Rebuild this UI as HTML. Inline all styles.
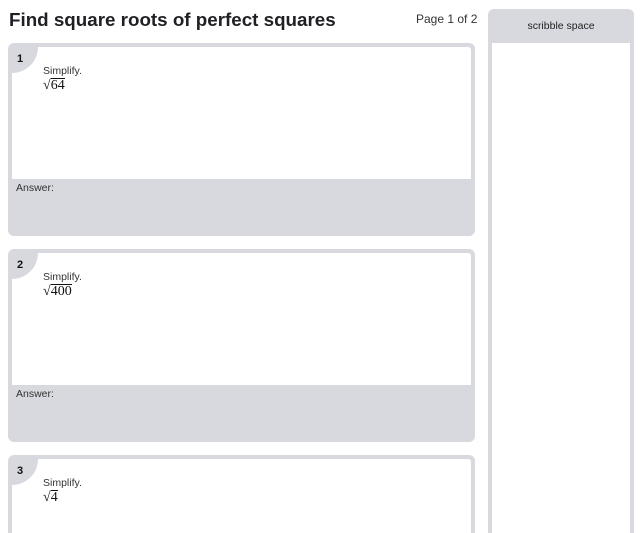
<!DOCTYPE html>
<html><head><style>
html,body{margin:0;width:640px;height:533px;overflow:hidden;background:#fff;font-family:"Liberation Sans",sans-serif;position:relative}
h1{position:absolute;left:9px;top:9px;margin:0;font-size:18.8px;font-weight:bold;color:#1f1f24}
.pg{position:absolute;left:416px;top:12px;font-size:12px;color:#333}
.card{position:absolute;left:8px;width:467px;height:193px;background:#d8d9df;border-radius:6px}
.in{position:absolute;left:4px;top:4px;width:459px;height:132px;background:#fff;border-radius:3px 3px 0 0;overflow:hidden}
.badge{position:absolute;left:0;top:0;width:26px;height:26px;background:#d8d9df;border-bottom-right-radius:26px}
.num{position:absolute;left:5px;top:6px;font-size:11px;font-weight:bold;color:#111}
.s{position:absolute;left:31px;top:18px;font-size:10.5px;color:#333}
.m{position:absolute;left:31px;top:31px;font-family:"Liberation Serif",serif;font-size:14px;line-height:16px;color:#111;font-weight:bold}
.m span{display:inline-block;border-top:1px solid #111;line-height:13px;font-weight:normal}
.ans{position:absolute;left:8px;top:139px;font-size:10.5px;color:#333}
.scr{position:absolute;left:488px;top:9px;width:146px;height:524px;background:#d8d9df;border-radius:6px 6px 0 0}
.scr .h{height:34px;line-height:34px;text-align:center;font-size:10.5px;color:#222}
.scr .w{position:absolute;left:4px;top:34px;right:4px;bottom:0;background:#fff}
</style></head><body>
<h1>Find square roots of perfect squares</h1>
<div class="pg">Page 1 of 2</div>
<div class="card" style="top:43px"><div class="in"><div class="badge"></div><div class="num">1</div><div class="s">Simplify.</div><div class="m">√<span>64</span></div></div><div class="ans">Answer:</div></div>
<div class="card" style="top:249px"><div class="in"><div class="badge"></div><div class="num">2</div><div class="s">Simplify.</div><div class="m">√<span>400</span></div></div><div class="ans">Answer:</div></div>
<div class="card" style="top:455px;height:78px;border-radius:6px 6px 0 0"><div class="in" style="height:74px"><div class="badge"></div><div class="num">3</div><div class="s">Simplify.</div><div class="m">√<span>4</span></div></div></div>
<div class="scr"><div class="h">scribble space</div><div class="w"></div></div>
</body></html>
